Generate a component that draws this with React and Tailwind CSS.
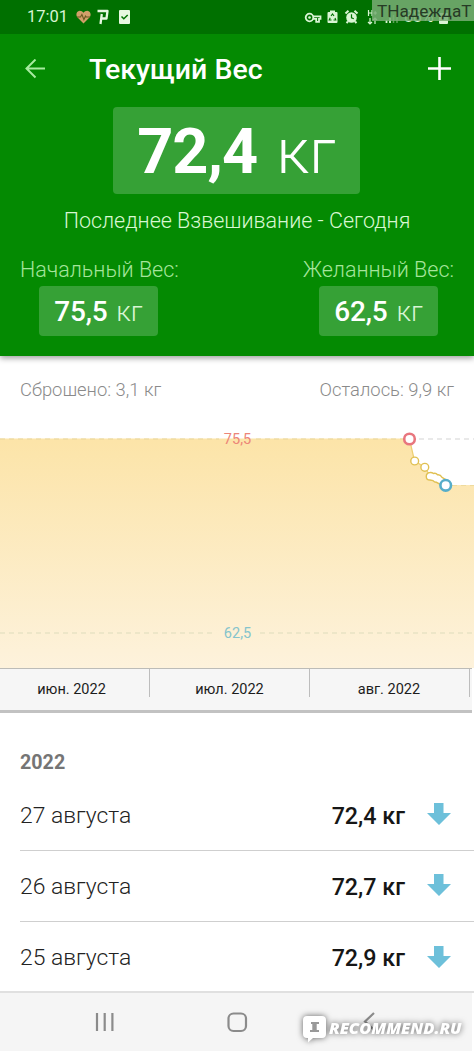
import React from 'react';

const ENTRIES = [
  { date: '27 августа', weight: '72,4 кг' },
  { date: '26 августа', weight: '72,7 кг' },
  { date: '25 августа', weight: '72,9 кг' },
];

function StatusBar() {
  return (
    <div className="relative h-[34px] bg-[#007000] flex items-center justify-between pl-[27px] text-[#d9f5d4]">
      <div className="flex items-center">
        <span className="w-[41px] text-[16.5px] whitespace-nowrap">17:01</span>
        <svg className="ml-[8px]" width="15" height="14" viewBox="0 0 15 14">
          <path d="M7.5 13.5 1.3 7.2C-.5 5 .4 1 3.7.7c1.700 0 3 .8 3.800 2.100C8.300 1.500 9.600.7 11.300.7c3.300.3 4.200 4.300 2.400 6.500z" fill="#d2a06a" />
          <path d="M1 7h3.500l1.400-2.500 2 5L9.500 6l.8 1H14" fill="none" stroke="#6b5a20" strokeWidth="1.100" />
        </svg>
        <svg className="ml-[6px]" width="13" height="16" viewBox="0 0 13 16">
          <path d="M.5 2H10.500L9.500 9.500H5M4.800 5 3.500 15" fill="none" stroke="#e6f8e0" strokeWidth="2.300" strokeLinejoin="round" />
        </svg>
        <svg className="ml-[9px]" width="11" height="14" viewBox="0 0 11 14">
          <rect width="11" height="14" rx="1" fill="#e6f8e0" />
          <path d="m2.500 6.500 2.300 2.300L8.700 5" fill="none" stroke="#007000" strokeWidth="1.500" />
        </svg>
      </div>
      <svg className="absolute left-[304px] top-[8px]" width="166" height="18" viewBox="0 0 166 18">
        <g fill="none" stroke="#d9f5d4" strokeWidth="1.800">
          <circle cx="5.500" cy="9.500" r="3.800" />
          <path d="M9 8.300h7.500v2.500H15v3h-2.800v-3H9" />
        </g>
        <circle cx="5.500" cy="9.500" r="1.300" fill="#d9f5d4" />
        <path d="M26 2.500h5V4h1.500q1 0 1 1v9q0 1-1 1h-8q-1 0-1-1V5q0-1 1-1H26z" fill="#d9f5d4" />
        <path d="m27 8 1.500-2L30 8M31 10l.8 2h-2.300M27.500 12h-2.300l1-2.200" fill="none" stroke="#007000" strokeWidth="1.100" />
        <circle cx="47.500" cy="9.500" r="5.300" fill="#d9f5d4" />
        <path d="m41.500 5.500 3-2.700M53.500 5.500l-3-2.700M44 13.500 42.500 15M51 13.500l1.500 1.500" stroke="#d9f5d4" strokeWidth="2" />
        <path d="M47.500 6.200v3.600l2.300 1" fill="none" stroke="#007000" strokeWidth="1.200" />
        <path d="M64.500 2v6M68 2v6M64.500 5H68M69.500 5H73M71.200 3.300v3.500M66 10v6M64 14l2 2 2-2M71 16v-6M69 12l2-2 2 2" fill="none" stroke="#d9f5d4" strokeWidth="1.200" />
        <path d="M82.500 12v3M86 10v5" stroke="#d9f5d4" strokeWidth="1.800" />
        <path d="M89.500 7v8M93 4v11" stroke="#5fa35c" strokeWidth="1.500" />
        <rect x="135" y="5" width="9" height="11" rx="1" fill="#d9f5d4" />
      </svg>
      <span className="absolute left-[404px] top-[5px] text-[16px]">88%</span>
      <div className="absolute right-0 top-0 w-[102px] h-[21px] bg-[#79ad75]/85 text-[#263a25] text-[17.200px] leading-[22px] pl-[5px] whitespace-nowrap">
        ТНадеждаТ
      </div>
    </div>
  );
}

function Goal({ label, value, side }) {
  return (
    <div>
      <div className="text-[21.500px] leading-[27px] font-light text-[#a5e59b] whitespace-nowrap">{label}</div>
      <div
        className={
          'w-[119px] h-[50px] mt-[3px] rounded-[4px] bg-[#36a136] text-white text-[28px] leading-[51px] text-center whitespace-nowrap ' +
          (side === 'left' ? 'ml-[19px]' : 'ml-[16px]')
        }
      >
        <span className="font-medium tracking-[-0.2px]">{value}</span>
        <span className="ml-[2px] font-light text-[#d9f5d4]"> кг</span>
      </div>
    </div>
  );
}

function Header() {
  return (
    <header className="relative h-[356px] bg-[#048a02] shadow-[0_2px_6px_rgba(0,0,0,0.4)]">
      <StatusBar />
      <div className="h-[73px] flex items-center justify-between pl-[25px] pr-[23px]">
        <div className="flex items-center">
          <svg className="-mt-[3px]" width="20" height="20" viewBox="0 0 20 20" fill="none" stroke="#a8eba0" strokeWidth="2">
            <path d="M20 9.500H1.500M10.500.5l-9 9 9 9" />
          </svg>
          <h1 className="ml-[44px] -mt-px text-[28.500px] leading-[34px] font-medium text-white whitespace-nowrap">Текущий Вес</h1>
        </div>
        <svg className="-mt-[4px]" width="23" height="23" viewBox="0 0 23 23" stroke="#fff" strokeWidth="2.600">
          <path d="M11.500 0v23M0 11.500h23" />
        </svg>
      </div>
      <div className="w-[247px] h-[87px] ml-[113px] rounded-[4px] bg-[#36a136] text-white text-[63px] leading-[89px] text-center whitespace-nowrap">
        <span className="font-bold tracking-[-1px]">72,4</span>
        <span className="ml-[4px] font-light"> кг</span>
      </div>
      <div className="mt-[13px] text-[21.500px] leading-[28px] font-light text-[#d9f7d2] text-center whitespace-nowrap">
        Последнее Взвешивание - Сегодня
      </div>
      <div className="mt-[21px] pl-[20px] pr-[20px] flex justify-between">
        <Goal label="Начальный Вес:" value="75,5" side="left" />
        <Goal label="Желанный Вес:" value="62,5" side="right" />
      </div>
    </header>
  );
}

function Chart() {
  return (
    <svg className="block" width="474" height="258" viewBox="0 410 474 258">
      <defs>
        <linearGradient id="fill" x1="0" y1="0" x2="0" y2="1">
          <stop offset="0" stopColor="#fce4a8" />
          <stop offset="1" stopColor="#fdf2dc" />
        </linearGradient>
      </defs>
      <path d="M0 438.500H409.500L414.500 461 424.500 467 430 476 445.500 485H474V668H0Z" fill="url(#fill)" />
      <g strokeWidth="1.200" strokeDasharray="5 4" fill="none">
        <path d="M0 439H219M256 439H403" stroke="#e8d59c" />
        <path d="M419 439H474" stroke="#d4d4d4" />
        <path d="M0 633H214M260 633H474" stroke="#dedcbc" />
        <path d="M452 485.500H474" stroke="#eedb9e" />
      </g>
      <path d="m409.500 439 5 22 10 6 6 9.500 6 2 9 6.500" fill="none" stroke="#edcf72" strokeWidth="1.200" />
      <g fill="#fff" stroke="#e0c052" strokeWidth="1.400">
        <circle cx="414.700" cy="461" r="3.900" />
        <circle cx="424.800" cy="467.300" r="3.900" />
        <path d="M430 472.500c1.500-.2 2.600.3 3.500 1 1.400-.5 3 0 4 1.300 2-.3 3.500.7 4.500 2.500l3 2-4 5.500-4.500-2.500q-2 .2-3.500-1.700l-3-.6c-5 0-5-7 0-7.500z" />
      </g>
      <circle cx="409.500" cy="439" r="5.300" fill="#fff" stroke="#e8767e" strokeWidth="2.600" />
      <circle cx="445.700" cy="485.300" r="5.300" fill="#fff" stroke="#56adc9" strokeWidth="2.600" />
      <text x="237.500" y="444" textAnchor="middle" fontSize="14.500" fill="#ec8578">75,5</text>
      <text x="237.500" y="638" textAnchor="middle" fontSize="14.500" fill="#85c4cc">62,5</text>
    </svg>
  );
}

function Months() {
  return (
    <div className="w-[472px] h-[45px] bg-[#f6f6f6] border-t border-t-[#bcbcb8] border-b-[3px] border-b-[#c2c2c2] flex text-[14.500px] leading-[41px] text-[#1c1c1c] text-center">
      <div className="w-[150px] h-[28px] pr-[6px] border-r border-[#bdbdbd]">июн. 2022</div>
      <div className="w-[160px] h-[28px] border-r border-[#bdbdbd]">июл. 2022</div>
      <div className="w-[160px] h-[28px] pr-[1px] border-r border-[#bdbdbd]">авг. 2022</div>
    </div>
  );
}

function Entry({ date, weight }) {
  return (
    <div className="h-[71px] ml-[20px] pt-[2px] border-b border-[#cfcfcf] last:border-b-0 flex items-center">
      <span className="flex-1 text-[22.900px] font-light text-[#222] whitespace-nowrap">{date}</span>
      <span className="text-[23.300px] font-medium text-[#161616] text-right whitespace-nowrap">{weight}</span>
      <svg className="ml-[22px] mr-[23px] -mt-[4px]" width="24" height="22" viewBox="0 0 24 22">
        <path d="M7 0h9.500v10H24L12 22 0 10h7z" fill="#6dc0da" />
      </svg>
    </div>
  );
}

function NavBar() {
  return (
    <div className="relative h-[58px] w-[472px] bg-[#f5f5f5]">
      <svg width="472" height="58" viewBox="0 0 472 58" fill="none" stroke="#8b8b8b" strokeWidth="2.200">
        <path d="M97 20v18M104.700 20v18M112.400 20v18" />
        <rect x="228.500" y="20.500" width="17.500" height="17.500" rx="5" />
        <path d="m374 20-9 8.500 9 8.500" />
      </svg>
      <div className="absolute left-[303px] top-[23px] flex items-center drop-shadow-[0_0_3px_rgba(0,0,0,0.6)]">
        <svg width="23" height="27" viewBox="0 0 23 27">
          <path d="M4 0h15q4 0 4 4v14q0 4-4 4h-9l-5 4.500V22H4q-4 0-4-4V4q0-4 4-4z" fill="#fff" />
          <path d="M8 6h8v2h-2.300v6H16v2H7v-2h2.300V8H8z" fill="#999" />
        </svg>
        <span className="ml-[3px] -mt-[3px] text-[16.400px] leading-[22px] font-extrabold italic text-white whitespace-nowrap font-['Open_Sans',sans-serif]">
          RECOMMEND.RU
        </span>
      </div>
    </div>
  );
}

export default function App() {
  return (
    <div className="w-[474px] h-[1053px] overflow-hidden bg-white font-['Roboto',sans-serif]">
      <Header />
      <div className="h-[54px] px-[20px] pt-[21px] flex justify-between text-[18.400px] leading-[26px] font-light text-[#8a8a8a] whitespace-nowrap">
        <span>Сброшено: 3,1 кг</span>
        <span>Осталось: 9,9 кг</span>
      </div>
      <Chart />
      <Months />
      <div className="h-[67px] pt-[37px] pl-[20px] text-[19.700px] leading-[25px] font-bold text-[#757575]">2022</div>
      <div className="h-[213px] border-b-2 border-[#e0e0e0]">
        {ENTRIES.map((entry) => (
          <Entry key={entry.date} date={entry.date} weight={entry.weight} />
        ))}
      </div>
      <NavBar />
    </div>
  );
}
